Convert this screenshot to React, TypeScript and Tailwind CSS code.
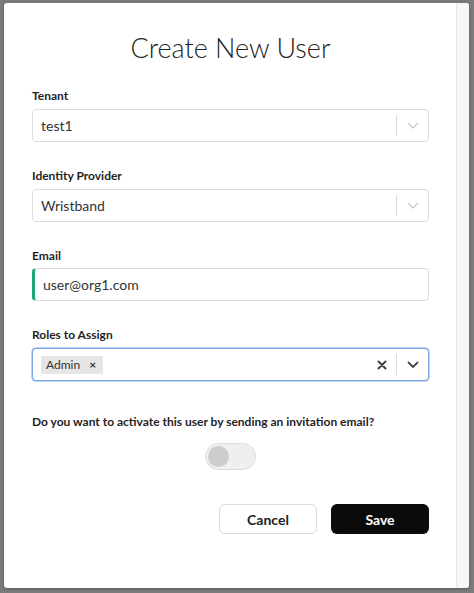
import React from "react";

const font = { fontFamily: "Lato, 'Open Sans', 'Liberation Sans', sans-serif" };

function Chevron({ dark }: { dark?: boolean }) {
  return (
    <svg width="12" height="8" viewBox="0 0 12 8" className="block">
      <polyline
        points="1.5,1.5 6,6 10.5,1.5"
        fill="none"
        stroke={dark ? "#4a4a4a" : "#c8c8c8"}
        strokeWidth={dark ? 1.8 : 1.3}
        strokeLinecap="round"
        strokeLinejoin="round"
      />
    </svg>
  );
}

function SelectBox({ value }: { value: string }) {
  return (
    <div className="flex h-[33px] items-center rounded-[4px] border border-[#dcdcdc] bg-white">
      <div className="flex-1 pl-[8px] text-[14px] text-[#333]">{value}</div>
      <div className="h-[21px] w-px bg-[#dcdcdc]" />
      <div className="flex w-[31px] items-center justify-center">
        <Chevron />
      </div>
    </div>
  );
}

function Label({ children }: { children: React.ReactNode }) {
  return <div className="text-[12px] font-bold leading-[16px] text-[#1f1f1f]">{children}</div>;
}

export default function App() {
  return (
    <div className="h-[593px] w-[474px] overflow-hidden bg-[#7b7b7b] pl-[4px] pt-[3px]" style={font}>
      <div className="flex h-[585px] w-[465px] overflow-hidden rounded-[3px] bg-white shadow-[0_1px_3px_rgba(0,0,0,0.3)]">
        <div className="w-[452px] pl-[28px] pr-[27px] pt-[29px]">
          <h1 className="text-center text-[27px] font-light leading-[32px] text-[#222]">Create New User</h1>

          <div className="mt-[24px]">
            <Label>Tenant</Label>
            <div className="mt-[5px]">
              <SelectBox value="test1" />
            </div>
          </div>

          <div className="mt-[26px]">
            <Label>Identity Provider</Label>
            <div className="mt-[5px]">
              <SelectBox value="Wristband" />
            </div>
          </div>

          <div className="mt-[26px]">
            <Label>Email</Label>
            <div className="mt-[4px] flex h-[33px] items-center rounded-[4px] border border-l-[3px] border-[#dcdcdc] border-l-[#1aa67a] bg-white pl-[8px] text-[14px] text-[#333]">
              user@org1.com
            </div>
          </div>

          <div className="mt-[26px]">
            <Label>Roles to Assign</Label>
            <div className="mt-[5px] flex h-[33px] items-center rounded-[4px] border border-[#7aa7ea] bg-white shadow-[0_0_0_0.5px_#7aa7ea]">
              <div className="flex flex-1 items-center pl-[8px]">
                <div className="flex h-[18px] items-center rounded-[2px] bg-[#e6e6e6] pl-[5px] pr-[7px] text-[12px] text-[#333]">
                  Admin
                  <span className="ml-[9px] text-[12px] font-bold leading-none text-[#333]">×</span>
                </div>
              </div>
              <div className="flex w-[31px] items-center justify-center pl-[3px]">
                <svg width="10" height="10" viewBox="0 0 10 10">
                  <path d="M1.5 1.5L8.5 8.5M8.5 1.5L1.5 8.5" stroke="#444" strokeWidth="2" strokeLinecap="round" />
                </svg>
              </div>
              <div className="h-[21px] w-px bg-[#dcdcdc]" />
              <div className="flex w-[31px] items-center justify-center">
                <Chevron dark />
              </div>
            </div>
          </div>

          <div className="mt-[33px] text-[12px] font-bold leading-[16px] text-[#1f1f1f]">
            Do you want to activate this user by sending an invitation email?
          </div>

          <div className="mt-[13px] flex justify-center">
            <div className="flex h-[27px] w-[51px] items-center rounded-full border border-[#dcdcdc] bg-[#efefef] pl-[2px]">
              <div className="h-[21px] w-[21px] rounded-full bg-[#cdcdcd]" />
            </div>
          </div>

          <div className="mt-[34px] flex justify-end gap-[14px]">
            <button className="h-[30px] w-[98px] rounded-[6px] border border-[#dcdcdc] bg-white text-[14px] font-bold text-[#222]">
              Cancel
            </button>
            <button className="h-[30px] w-[98px] rounded-[6px] bg-[#0b0b0b] text-[14px] font-bold text-white">
              Save
            </button>
          </div>
        </div>
        <div className="w-[13px] border-l border-[#e8e8e8] bg-[#f7f7f7]" />
      </div>
    </div>
  );
}
